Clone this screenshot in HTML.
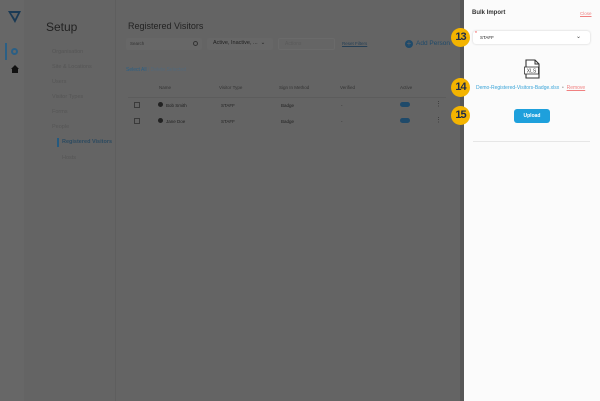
<!DOCTYPE html>
<html><head><style>
*{margin:0;padding:0;box-sizing:border-box}
body{width:600px;height:401px;overflow:hidden;background:#646464;font-family:"Liberation Sans",sans-serif;position:relative}
.a{position:absolute;white-space:nowrap}
.m{color:#555;font-size:5.5px}
.b{width:19px;height:19px;border-radius:50%;background:#f4b400;color:#1c2a4a;font-weight:bold;font-size:11px;text-align:center;line-height:19px;letter-spacing:-1px}
</style></head><body>
<div class="a" style="left:0;top:0;width:24px;height:401px;background:#676767"></div>
<div class="a" style="left:115px;top:0;width:1px;height:401px;background:#5e5e5e"></div>
<svg class="a" style="left:8px;top:11px" width="13" height="12" viewBox="0 0 13 12"><path d="M0 0H13L7 12Z" fill="#1a3a55"/><path d="M3 2H10L7 8Z" fill="#646464"/></svg>
<div class="a" style="left:5px;top:43px;width:1.5px;height:17px;background:#2a5f85"></div>
<div class="a" style="left:11px;top:48px;width:7px;height:7px;border-radius:50%;border:2px solid #2a5f85"></div>
<div class="a" style="left:11px;top:65px;width:0;height:0;border-left:4px solid transparent;border-right:4px solid transparent;border-bottom:4px solid #111"></div>
<div class="a" style="left:12px;top:69px;width:6px;height:4px;background:#111"></div>
<div class="a" style="left:46px;top:20px;font-size:12px;color:#222">Setup</div>
<div class="a m" style="left:52px;top:49px">Organisation</div>
<div class="a m" style="left:52px;top:64px">Site &amp; Locations</div>
<div class="a m" style="left:52px;top:79px">Users</div>
<div class="a m" style="left:52px;top:94px">Visitor Types</div>
<div class="a m" style="left:52px;top:109px">Forms</div>
<div class="a m" style="left:52px;top:124px">People</div>
<div class="a" style="left:57px;top:138px;width:2px;height:9px;background:#245a80"></div>
<div class="a" style="left:62px;top:139px;font-size:5.5px;color:#2b4a60;font-weight:bold">Registered Visitors</div>
<div class="a m" style="left:62px;top:155px">Hosts</div>
<div class="a" style="left:128px;top:21px;font-size:9px;color:#222">Registered Visitors</div>
<div class="a" style="left:126px;top:38px;width:76px;height:12px;background:#676767;border-radius:2px"></div>
<div class="a" style="left:130px;top:41px;font-size:4.5px;color:#333">Search</div>
<div class="a" style="left:193px;top:41px;width:5px;height:5px;border:1px solid #333;border-radius:50%"></div>
<div class="a" style="left:207px;top:38px;width:66px;height:12px;background:#676767;border-radius:2px"></div>
<div class="a" style="left:213px;top:40px;font-size:5.5px;color:#222">Active, Inactive, ...&nbsp;&nbsp;⌄</div>
<div class="a" style="left:278px;top:38px;width:57px;height:12px;background:#656565;border-radius:2px;border:1px solid #6a6a6a"></div>
<div class="a" style="left:285px;top:41px;font-size:5px;color:#5a5a5a">Actions</div>
<div class="a" style="left:342px;top:41px;font-size:4.5px;color:#253f55;text-decoration:underline">Reset Filters</div>
<div class="a" style="left:405px;top:40px;width:8px;height:8px;border-radius:50%;background:#1f4a6a;color:#646464;font-size:8px;line-height:8px;text-align:center">+</div>
<div class="a" style="left:416px;top:40px;font-size:6.5px;color:#1f4a6a">Add Person</div>
<div class="a" style="left:126px;top:67px;font-size:5px;color:#2a5f85">Select All <span style="color:#52687a">| Delete Selected</span></div>
<div class="a m" style="left:159px;top:85px;color:#333;font-size:4.5px">Name</div>
<div class="a m" style="left:219px;top:85px;color:#333;font-size:4.5px">Visitor Type</div>
<div class="a m" style="left:279px;top:85px;color:#333;font-size:4.5px">Sign In Method</div>
<div class="a m" style="left:340px;top:85px;color:#333;font-size:4.5px">Verified</div>
<div class="a m" style="left:400px;top:85px;color:#333;font-size:4.5px">Active</div>
<div class="a" style="left:128px;top:97px;width:318px;height:1px;background:#5c5c5c"></div>
<div class="a" style="left:134px;top:102px;width:6px;height:6px;border:1px solid #3a3a3a"></div>
<div class="a" style="left:158px;top:102px;width:5px;height:5px;border-radius:50%;background:#222"></div>
<div class="a" style="left:166px;top:103px;font-size:4.5px;color:#222">Bob Smith</div>
<div class="a" style="left:221px;top:103px;font-size:4.5px;color:#222">STAFF</div>
<div class="a" style="left:281px;top:103px;font-size:4.5px;color:#222">Badge</div>
<div class="a" style="left:341px;top:103px;font-size:4.5px;color:#222">-</div>
<div class="a" style="left:400px;top:102px;width:10px;height:5px;border-radius:3px;background:#1f4a6a"></div>
<div class="a" style="left:435px;top:100px;font-size:7px;color:#333">⋮</div>
<div class="a" style="left:134px;top:118px;width:6px;height:6px;border:1px solid #3a3a3a"></div>
<div class="a" style="left:158px;top:118px;width:5px;height:5px;border-radius:50%;background:#222"></div>
<div class="a" style="left:166px;top:119px;font-size:4.5px;color:#222">Jane Doe</div>
<div class="a" style="left:221px;top:119px;font-size:4.5px;color:#222">STAFF</div>
<div class="a" style="left:281px;top:119px;font-size:4.5px;color:#222">Badge</div>
<div class="a" style="left:341px;top:119px;font-size:4.5px;color:#222">-</div>
<div class="a" style="left:400px;top:118px;width:10px;height:5px;border-radius:3px;background:#1f4a6a"></div>
<div class="a" style="left:435px;top:116px;font-size:7px;color:#333">⋮</div>
<div class="a" style="left:460px;top:0;width:4px;height:401px;background:#575757"></div>
<div class="a" style="left:464px;top:0;width:136px;height:401px;background:#fbfbfb"></div>
<div class="a" style="left:472px;top:10px;font-size:6px;font-weight:bold;color:#333">Bulk Import</div>
<div class="a" style="left:580px;top:11px;font-size:4.5px;color:#f08080;text-decoration:underline">Close</div>
<div class="a" style="left:473px;top:31px;width:117px;height:13px;background:#fff;border-radius:3px;box-shadow:0 0 2px #ccc"></div>
<div class="a" style="left:475px;top:31px;font-size:5px;color:#e33">*</div>
<div class="a" style="left:480px;top:35px;font-size:4.5px;color:#222">STAFF</div>
<div class="a" style="left:576px;top:33px;font-size:6px;color:#444">⌄</div>
<svg class="a" style="left:522px;top:59px" width="20" height="20" viewBox="0 0 20 20"><path d="M4 1H13L17 5V19H4Z" fill="#fff" stroke="#333" stroke-width="1.1"/><path d="M13 1V5H17" fill="none" stroke="#333"/><rect x="2.5" y="8" width="14" height="7" fill="#fff" stroke="#333" stroke-width="0.8"/><text x="9.5" y="13.5" font-size="5" text-anchor="middle" fill="#333" font-family="Liberation Sans">XLS</text></svg>
<div class="a" style="left:476px;top:85px;font-size:5px;color:#3aa4d8">Demo-Registered-Visitors-Badge.xlsx <span style="color:#999">&nbsp;•&nbsp;</span> <span style="color:#f08080;text-decoration:underline">Remove</span></div>
<div class="a" style="left:514px;top:109px;width:36px;height:14px;background:#1ea0dc;border-radius:3px;color:#fff;font-size:5px;font-weight:bold;text-align:center;line-height:14px">Upload</div>
<div class="a" style="left:473px;top:141px;width:117px;height:1px;background:#e6e6e6"></div>
<div class="a b" style="left:451px;top:28px">13</div>
<div class="a b" style="left:451px;top:78px">14</div>
<div class="a b" style="left:451px;top:106px">15</div>
</body></html>
